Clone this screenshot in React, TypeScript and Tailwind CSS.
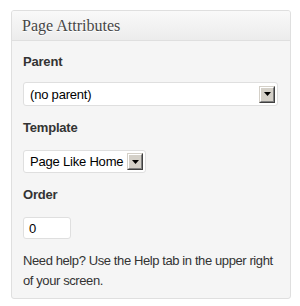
import React from "react";

function DropButton() {
  return (
    <div className="w-[16px] h-[17px] bg-[#d4d0c8] border-t border-l border-t-[#d4d0c8] border-l-[#d4d0c8] border-r border-b border-r-[#404040] border-b-[#404040] shrink-0">
      <div className="w-full h-full border-t border-l border-t-white border-l-white border-r border-b border-r-[#808080] border-b-[#808080] flex items-center justify-center">
        <svg width="7" height="4" viewBox="0 0 7 4">
          <path d="M0 0H7L3.5 4Z" fill="#000" />
        </svg>
      </div>
    </div>
  );
}

export default function App() {
  const sans = { fontFamily: '"Liberation Sans", Arial, sans-serif' };
  return (
    <div className="w-[300px] h-[306px] bg-white pt-[10px] pl-[11px]" style={sans}>
      <div className="w-[280px] border border-[#dfdfdf] rounded-[3px] bg-[#f5f5f5] overflow-hidden">
        <div
          className="h-[30px] border-b border-[#dfdfdf] bg-gradient-to-b from-[#f9f9f9] to-[#ececec] pl-[10px] text-[16px] leading-[29px] text-[#464646] [text-shadow:0_1px_0_#fff]"
          style={{ fontFamily: '"Liberation Serif", Georgia, serif' }}
        >
          Page Attributes
        </div>
        <div className="px-[11px] pt-[13px] pb-[7px] text-[13px] tracking-[-0.2px] text-[#333]">
          <div className="font-bold leading-[15px]">Parent</div>
          <div className="mt-[13px] h-[24px] w-[255px] bg-white border border-[#dfdfdf] rounded-[3px] flex items-center justify-between pl-[6px] pr-[2px]">
            <span className="text-black leading-[15px]">(no parent)</span>
            <DropButton />
          </div>
          <div className="mt-[14px] font-bold leading-[15px]">Template</div>
          <div className="mt-[15px] h-[23px] w-[123px] bg-white border border-[#dfdfdf] rounded-[3px] flex items-center justify-between pl-[6px] pr-[2px]">
            <span className="text-black leading-[15px]">Page Like Home</span>
            <DropButton />
          </div>
          <div className="mt-[14px] font-bold leading-[15px]">Order</div>
          <div className="mt-[15px] h-[22px] w-[48px] bg-white border border-[#dfdfdf] rounded-[3px] flex items-center pl-[5px]">
            <span className="text-black leading-[15px]">0</span>
          </div>
          <p className="mt-[12px] leading-[20px] w-[262px] tracking-[-0.4px]">
            Need help? Use the Help tab in the upper right of your screen.
          </p>
        </div>
      </div>
    </div>
  );
}
